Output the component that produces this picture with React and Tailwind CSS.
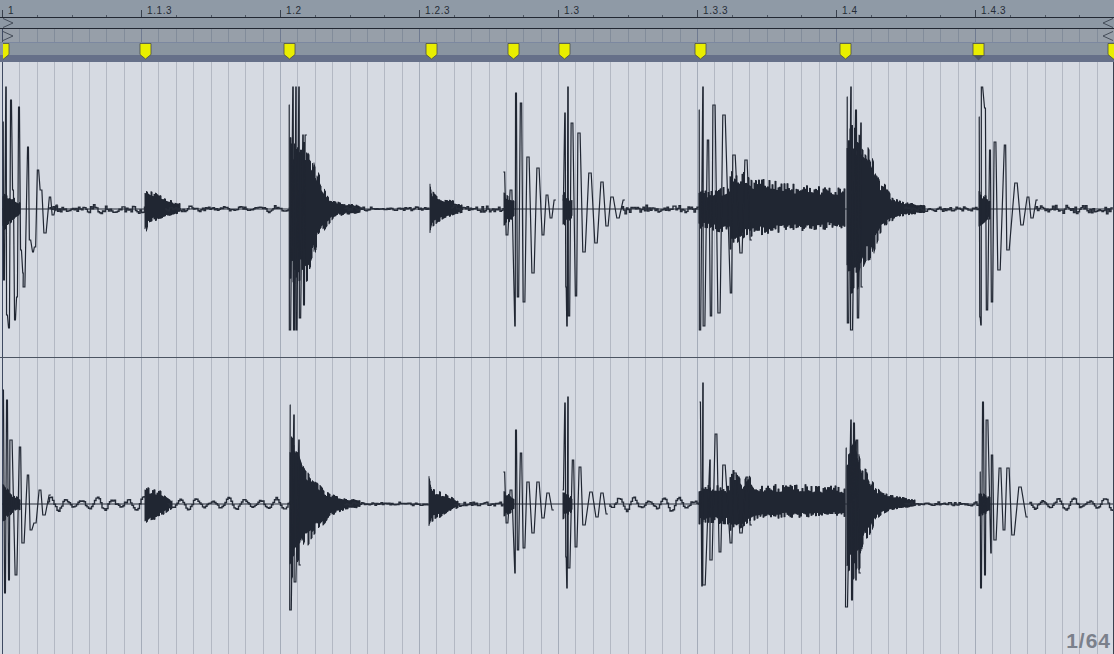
const CELLS = Array.from({ length: 64 }, (_, i) => i);
const LABELS = ["1", "1.1.3", "1.2", "1.2.3", "1.3", "1.3.3", "1.4", "1.4.3"];
const MARKERS = [145, 289, 431, 513, 564, 700, 845];

let seed = 1234;
const rand = () => {
  seed = (seed * 16807) % 2147483647;
  return seed / 2147483647;
};

const lerp = (pts, x) => {
  for (let i = 1; i < pts.length; i++) {
    if (x <= pts[i][0]) {
      const [x0, y0] = pts[i - 1];
      const [x1, y1] = pts[i];
      return y0 + ((y1 - y0) * (x - x0)) / (x1 - x0);
    }
  }
  return pts[pts.length - 1][1];
};

// continuous line through hand-read peaks, each peak gets a short flat top
const zig = (pts) => {
  const sorted = [...pts].sort((a, b) => a[0] - b[0]);
  let d = "";
  sorted.forEach(([x, y], i) => {
    const next = sorted[i + 1] ? sorted[i + 1][0] - x : 4;
    const w = Math.min(1.2, Math.max(0.2, next * 0.22));
    d += `${i ? "L" : "M"}${x - w} ${y}H${x + w}`;
  });
  return d;
};

// solid burst between a top and bottom envelope
const dense = (top, bot, c) => {
  let d = "";
  const x0 = top[0][0];
  const x1 = top[top.length - 1][0];
  let k1 = 1;
  let k2 = 1;
  let n = 0;
  for (let x = x0; x <= x1; x += 0.5) {
    if (n % 3 === 0) {
      k1 = 0.6 + 0.4 * rand();
      k2 = 0.6 + 0.4 * rand();
    }
    n++;
    const t = c - (c - lerp(top, x)) * k1;
    const b = c + (lerp(bot, x) - c) * k2;
    d += `M${x} ${t.toFixed(1)}V${b.toFixed(1)}`;
  }
  return d;
};

// low level tail, sine part gives the ripple of the lower channel
const tail = (x0, x1, c, a, noise, period) => {
  let d = `M${x0} ${c}`;
  for (let x = x0; x <= x1; x += 1.5) {
    const s = a * Math.sin((2 * Math.PI * x) / period) * (0.7 + 0.3 * Math.sin(x / 7));
    const y = c - s + noise * (rand() * 2 - 1);
    d += `H${x}V${y.toFixed(1)}`;
  }
  return d;
};

const c1 = 209;
const c2 = 504;

const SPIKES = [
  // upper channel
  [[3, 122], [4, 280], [6, 87], [7, 315], [9, 328], [11, 100], [13, 190], [15, 320], [17, 297], [19, 107], [21, 250], [23, 273], [24, 287], [28, 147], [30, 240], [33, 252], [35, 247], [38, 170], [41, 190], [45, 233], [50, 197], [53, 215], [57, 205]],
  [[289, 105], [290, 330], [293, 87], [294, 330], [296, 87], [296.5, 330], [299, 87], [300, 318], [303, 135], [304, 305], [306, 135]],
  [[504, 172], [507, 235], [511, 190], [515, 326], [516, 93], [518, 297], [521, 103], [524, 302], [528, 157], [533, 273], [538, 168], [543, 235], [547, 195], [551, 218], [555, 200]],
  [[563, 200], [565, 113], [566, 287], [567, 326], [568, 87], [569, 316], [572, 123], [576, 296], [579, 133], [584, 252], [590, 173], [596, 243], [602, 182], [607, 226], [612, 197], [618, 218], [624, 200]],
  [[699, 110], [700, 330], [703, 87], [704, 326], [708, 140], [711, 316], [714, 105], [719, 313], [724, 115], [731, 293], [734, 155], [741, 253], [746, 160], [751, 240]],
  [[847, 97], [848, 323], [851, 87], [851.5, 330], [856, 110], [858, 318], [861, 123], [862, 287]],
  [[979, 117], [980, 317], [981, 325], [982, 87], [985, 108], [987, 310], [990, 150], [992, 302], [995, 142], [999, 270], [1005, 145], [1008, 250], [1016, 183], [1022, 225], [1028, 197], [1032, 218], [1037, 200]],
  // lower channel
  [[3, 390], [5, 593], [7, 400], [9, 580], [11, 440], [16, 575], [20, 447], [23, 543], [28, 475], [31, 530], [35, 523], [40, 490], [44, 515], [50, 495]],
  [[290, 405], [290.5, 610], [294, 415], [295, 582], [299, 440], [300, 565]],
  [[504, 472], [507, 523], [511, 490], [515, 573], [516, 430], [518, 550], [521, 453], [524, 548], [528, 482], [533, 533], [538, 482], [543, 518], [548, 493], [553, 510]],
  [[563, 490], [565, 403], [566, 557], [567, 588], [568, 397], [569, 568], [573, 460], [576, 547], [580, 467], [584, 525], [591, 492], [597, 517], [602, 493], [607, 514]],
  [[700, 402], [702, 586], [703, 383], [704, 585], [710, 460], [711, 560], [716, 434], [720, 552], [724, 465], [731, 543], [735, 473], [741, 533], [747, 477], [751, 525]],
  [[846, 448], [846.5, 607], [851, 420], [852, 600], [854, 423], [856, 580], [857, 440], [860, 573]],
  [[980, 472], [981, 588], [983, 402], [985, 575], [987, 420], [991, 553], [992, 455], [995, 540], [1000, 468], [1004, 530], [1008, 468], [1013, 535], [1020, 487], [1027, 517]],
];

const SOLID = [
  dense([[3, 188], [12, 196], [20, 202]], [[3, 232], [12, 222], [20, 216]], c1),
  dense([[145, 185], [150, 190], [155, 192], [165, 198], [180, 203]], [[145, 238], [148, 226], [155, 222], [165, 218], [180, 213]], c1),
  dense([[290, 135], [303, 135], [306, 135], [312, 147], [316, 165], [320, 175], [325, 190], [330, 198], [345, 203], [360, 205]], [[290, 290], [300, 285], [305, 285], [310, 280], [313, 270], [318, 243], [325, 230], [335, 217], [345, 215], [360, 213]], c1),
  dense([[430, 174], [432, 190], [440, 197], [452, 200], [462, 204]], [[430, 243], [432, 228], [440, 222], [452, 216], [462, 213]], c1),
  dense([[504, 190], [514, 200]], [[504, 228], [514, 218]], c1),
  dense([[563, 190], [572, 200]], [[563, 230], [572, 218]], c1),
  dense([[699, 190], [712, 190], [730, 185]], [[699, 232], [712, 232], [730, 235]], c1),
  dense([[730, 165], [736, 170], [746, 170], [756, 178], [770, 180], [800, 184], [845, 188]], [[730, 250], [736, 250], [745, 240], [755, 236], [800, 233], [845, 228]], c1),
  dense([[847, 125], [856, 125], [861, 130], [866, 138], [870, 147], [875, 163], [880, 180], [885, 183], [892, 197], [905, 202], [925, 205]], [[847, 300], [858, 295], [860, 287], [866, 270], [870, 270], [875, 250], [880, 235], [890, 223], [900, 217], [925, 213]], c1),
  dense([[979, 190], [990, 198]], [[979, 228], [990, 220]], c1),
  dense([[3, 482], [12, 494], [20, 498]], [[3, 525], [12, 514], [20, 510]], c2),
  dense([[145, 485], [150, 488], [160, 490], [172, 500]], [[145, 529], [150, 522], [160, 518], [172, 509]], c2),
  dense([[290, 425], [299, 440], [304, 460], [310, 470], [315, 478], [325, 490], [340, 497], [360, 500]], [[290, 585], [300, 565], [305, 550], [310, 543], [320, 530], [330, 518], [345, 510], [360, 508]], c2),
  dense([[429, 472], [432, 488], [440, 491], [452, 497], [458, 501]], [[429, 535], [432, 522], [440, 519], [452, 511], [458, 508]], c2),
  dense([[504, 490], [514, 498]], [[504, 518], [514, 511]], c2),
  dense([[563, 490], [572, 497]], [[563, 520], [572, 512]], c2),
  dense([[699, 485], [712, 485], [730, 485]], [[699, 525], [712, 525], [730, 525]], c2),
  dense([[730, 470], [736, 470], [742, 482], [748, 472], [755, 484], [800, 484], [845, 486]], [[730, 532], [738, 532], [750, 524], [765, 519], [800, 518], [845, 517]], c2),
  dense([[847, 440], [854, 430], [857, 440], [862, 463], [867, 465], [872, 480], [880, 490], [895, 495], [915, 499]], [[847, 590], [856, 580], [860, 573], [865, 543], [870, 540], [876, 520], [885, 513], [900, 509], [915, 507]], c2),
  dense([[979, 490], [990, 497]], [[979, 520], [990, 512]], c2),
].join("");

const TAILS = [
  tail(50, 145, c1, 2, 3.6, 13),
  tail(165, 290, c1, 2.2, 1.8, 17),
  tail(345, 430, c1, 1, 1.4, 9),
  tail(452, 505, c1, 1, 2.8, 11),
  tail(622, 699, c1, 2, 3.4, 14),
  tail(905, 979, c1, 1, 2, 9),
  tail(1036, 1113, c1, 2, 3.2, 15),
  tail(48, 146, c2, 6.5, 1.2, 15.5),
  tail(168, 290, c2, 6, 1, 16),
  tail(345, 430, c2, 0.8, 1.2, 9),
  tail(455, 504, c2, 0.8, 2, 11),
  tail(610, 699, c2, 7, 1, 15),
  tail(905, 979, c2, 1, 1.5, 9),
  tail(1030, 1113, c2, 6.5, 1, 15.5),
];

const GridRow = ({ dark = false }) => (
  <div className="flex h-full pl-[2px]">
    {CELLS.map((i) => (
      <div
        key={i}
        className={`h-full w-[17.375px] shrink-0 border-l ${
          i === 0
            ? "border-[#3f4a62]"
            : i % 8 === 0
              ? dark ? "border-[#6f7a90]" : "border-[#a5acb9]"
              : dark ? "border-[#828c9a]" : "border-[#b3b8c3]"
        }`}
      />
    ))}
  </div>
);

const Loop = ({ flip }) => (
  <svg width="12" height="10" viewBox="0 0 12 10" className="shrink-0">
    <path d={flip ? "M11 0.5L1 5L11 9.5" : "M1 0.5L11 5L1 9.5"} fill="none" stroke="#3c4450" strokeWidth="0.9" />
  </svg>
);

const Marker = ({ x, square }) => (
  <svg width="13" height="18" viewBox="0 0 13 18" className="absolute top-0" style={{ left: x - 6.5 }}>
    {square ? (
      <>
        <path d="M2 13H11L6.5 17.5Z" fill="#4b5464" />
        <rect x="1" y="0.5" width="11" height="12" fill="#e9ee00" stroke="#4a4f48" strokeWidth="0.8" />
      </>
    ) : (
      <path d="M1 0.5H12V11.5L6.5 16L1 11.5Z" fill="#e9ee00" stroke="#4a4f48" strokeWidth="0.8" />
    )}
  </svg>
);

export default function App() {
  return (
    <div className="flex h-[654px] w-[1114px] flex-col overflow-hidden bg-[#d6dae2] font-['Liberation_Sans',sans-serif]">
      {/* RULER */}
      <div className="flex h-[17px] shrink-0 bg-[#8f9aa6] pl-[2px]">
        {LABELS.map((label) => (
          <div key={label} className="relative flex h-full w-[139px] shrink-0">
            <div className="mt-[10px] h-[7px] w-px bg-[#39414d]" />
            <div className="ml-[5px] mt-[5px] text-[10px] leading-[12px] tracking-[0.6px] text-[#262c36]">{label}</div>
            <div className="absolute bottom-0 left-[35px] h-[2px] w-px bg-[#4d5663]" />
            <div className="absolute bottom-0 left-[70px] h-[2px] w-px bg-[#4d5663]" />
            <div className="absolute bottom-0 left-[104px] h-[2px] w-px bg-[#4d5663]" />
          </div>
        ))}
      </div>

      {/* LOOP ROWS */}
      <div className="flex h-[12px] shrink-0 items-center justify-between border-y border-[#222833] bg-[#8d98a4] pl-[2px]">
        <Loop />
        <Loop flip />
      </div>
      <div className="relative h-[14px] shrink-0 border-b border-[#7c88a0] bg-[#979fa9]">
        <GridRow dark />
        <div className="absolute inset-0 flex items-center justify-between pl-[2px]">
          <Loop />
          <Loop flip />
        </div>
      </div>

      {/* MARKERS */}
      <div className="relative z-10 flex h-[12px] shrink-0 bg-[#8a95a1]">
        <div className="absolute left-[3px] top-0 h-[18px] w-[7px] overflow-hidden">
          <Marker x={0} />
        </div>
        {MARKERS.map((x) => (
          <Marker key={x} x={x} />
        ))}
        <Marker x={978} square />
        <div className="absolute right-0 top-0 h-[18px] w-[7px] overflow-hidden">
          <Marker x={6} />
        </div>
      </div>
      <div className="h-[7px] shrink-0 bg-[#667089]" />

      {/* WAVEFORM */}
      <div className="relative flex flex-1 flex-col">
        <div className="h-[296px] shrink-0 border-b border-[#4c5462]">
          <GridRow />
        </div>
        <div className="flex-1">
          <GridRow />
        </div>
        <svg viewBox="0 62 1114 592" className="absolute inset-0 h-full w-full blur-[0.3px]">
          <path d={`M2 ${c1}H1114M2 ${c2}H1114`} stroke="#262c38" strokeWidth="1" />
          <path d={SOLID} fill="none" stroke="#202632" strokeWidth="1" />
          {SPIKES.map((s, i) => (
            <path key={i} d={zig(s)} fill="none" stroke="#202632" strokeWidth="1.2" />
          ))}
          {TAILS.map((d, i) => (
            <path key={i} d={d} fill="none" stroke="#262c38" strokeWidth="1.4" />
          ))}
        </svg>
        <div className="absolute bottom-[2px] right-[3px] text-[21px] font-bold leading-[22px] tracking-[1px] text-[#7b808b]">1/64</div>
        <div className="absolute bottom-0 right-0 top-0 w-px bg-[#39414f]" />
      </div>
    </div>
  );
}
